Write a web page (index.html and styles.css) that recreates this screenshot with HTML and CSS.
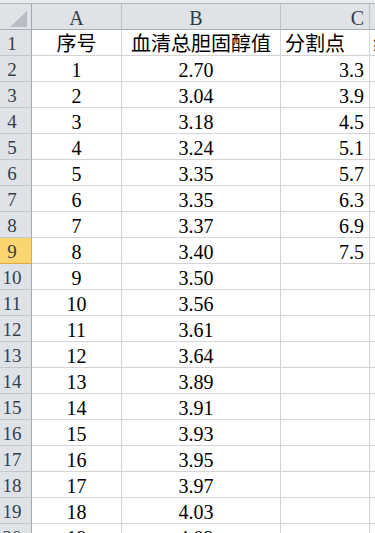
FILE: index.html
```html
<!DOCTYPE html>
<html>
	<head>
		<meta charset="UTF-8">
		<title>Sheet1</title>
		<link rel="stylesheet" href="styles.css">
	</head>
	<body>
		<div class="strip"></div>
		<div class="sheet">
			<div class="row head">
				<div class="c rh corner"><i class="tri"></i></div>
				<div class="c ca">A</div>
				<div class="c cb">B</div>
				<div class="c cc">C</div>
				<div class="c cd"></div>
			</div>
			<div class="row">
				<div class="c rh">1</div>
				<div class="c ca">序号</div>
				<div class="c cb title">血清总胆固醇值</div>
				<div class="c cc title">分割点</div>
				<div class="c cd">组距</div>
			</div>
			<div class="row"><div class="c rh">2</div><div class="c ca">1</div><div class="c cb">2.70</div><div class="c cc">3.3</div><div class="c cd"></div></div>
			<div class="row"><div class="c rh">3</div><div class="c ca">2</div><div class="c cb">3.04</div><div class="c cc">3.9</div><div class="c cd"></div></div>
			<div class="row"><div class="c rh">4</div><div class="c ca">3</div><div class="c cb">3.18</div><div class="c cc">4.5</div><div class="c cd"></div></div>
			<div class="row"><div class="c rh">5</div><div class="c ca">4</div><div class="c cb">3.24</div><div class="c cc">5.1</div><div class="c cd"></div></div>
			<div class="row"><div class="c rh">6</div><div class="c ca">5</div><div class="c cb">3.35</div><div class="c cc">5.7</div><div class="c cd"></div></div>
			<div class="row"><div class="c rh">7</div><div class="c ca">6</div><div class="c cb">3.35</div><div class="c cc">6.3</div><div class="c cd"></div></div>
			<div class="row"><div class="c rh">8</div><div class="c ca">7</div><div class="c cb">3.37</div><div class="c cc">6.9</div><div class="c cd"></div></div>
			<div class="row"><div class="c rh active">9</div><div class="c ca">8</div><div class="c cb">3.40</div><div class="c cc">7.5</div><div class="c cd"></div></div>
			<div class="row"><div class="c rh">10</div><div class="c ca">9</div><div class="c cb">3.50</div><div class="c cc"></div><div class="c cd"></div></div>
			<div class="row"><div class="c rh">11</div><div class="c ca">10</div><div class="c cb">3.56</div><div class="c cc"></div><div class="c cd"></div></div>
			<div class="row"><div class="c rh">12</div><div class="c ca">11</div><div class="c cb">3.61</div><div class="c cc"></div><div class="c cd"></div></div>
			<div class="row"><div class="c rh">13</div><div class="c ca">12</div><div class="c cb">3.64</div><div class="c cc"></div><div class="c cd"></div></div>
			<div class="row"><div class="c rh">14</div><div class="c ca">13</div><div class="c cb">3.89</div><div class="c cc"></div><div class="c cd"></div></div>
			<div class="row"><div class="c rh">15</div><div class="c ca">14</div><div class="c cb">3.91</div><div class="c cc"></div><div class="c cd"></div></div>
			<div class="row"><div class="c rh">16</div><div class="c ca">15</div><div class="c cb">3.93</div><div class="c cc"></div><div class="c cd"></div></div>
			<div class="row"><div class="c rh">17</div><div class="c ca">16</div><div class="c cb">3.95</div><div class="c cc"></div><div class="c cd"></div></div>
			<div class="row"><div class="c rh">18</div><div class="c ca">17</div><div class="c cb">3.97</div><div class="c cc"></div><div class="c cd"></div></div>
			<div class="row"><div class="c rh">19</div><div class="c ca">18</div><div class="c cb">4.03</div><div class="c cc"></div><div class="c cd"></div></div>
			<div class="row"><div class="c rh">20</div><div class="c ca">19</div><div class="c cb">4.09</div><div class="c cc"></div><div class="c cd"></div></div>
		</div>
	</body>
</html>
```

FILE: styles.css
```css
html {
	background-color: #FFFFFF;
	color: #000000;
}
body {
	margin: 0;
	height: 533px;
	overflow: hidden;
	font-family: "Liberation Serif", "Noto Sans CJK SC", serif;
	font-size: 20px;
}
.strip {
	height: 3px;
	background-color: #E8EAED;
}
.sheet {
	width: 375px;
}
.row {
	display: flex;
}
.c {
	flex: none;
	box-sizing: border-box;
	height: 26px;
	padding-top: 3px;
	line-height: 22px;
	white-space: nowrap;
	overflow: hidden;
	border-right: 1px solid #D4D4D4;
	border-bottom: 1px solid #D4D4D4;
}

/* column widths */
.rh {
	width: 32px;
	padding-right: 7px;
	text-align: center;
	font-size: 19px;
	color: #33404E;
	background-color: #DFE3E8;
	border-right-color: #A3A8AE;
	border-bottom-color: #C3C7CC;
}
.ca {
	width: 90px;
	text-align: center;
}
.cb {
	width: 159px;
	text-align: center;
	padding-right: 10px;
}
.cb.title {
	padding-right: 0;
}
.cc {
	width: 89px;
	text-align: right;
	padding-right: 5px;
}
.cc.title {
	text-align: left;
	padding-left: 4px;
	padding-right: 0;
}
.cd {
	flex: 1;
	border-right: none;
	padding-left: 3px;
}

/* column header row */
.head .c {
	height: 27px;
	border-top: 1px solid #B4B9BF;
	background-color: #DFE3E8;
	border-right-color: #BCC1C7;
	border-bottom-color: #A9AEB4;
	color: #333A44;
}
.head .rh {
	border-right-color: #A3A8AE;
}
.corner {
	display: flex;
	justify-content: flex-end;
	align-items: flex-end;
	padding: 0 4px 2px 0;
}
.tri {
	display: block;
	width: 17px;
	height: 16px;
	background-color: #B8BDC3;
	clip-path: polygon(100% 0, 100% 100%, 0 100%);
}

/* selected row */
.rh.active {
	background-color: #FBD56F;
	border-right-color: #E3A941;
	border-bottom-color: #E3A941;
	color: #3B3B3B;
}
```
